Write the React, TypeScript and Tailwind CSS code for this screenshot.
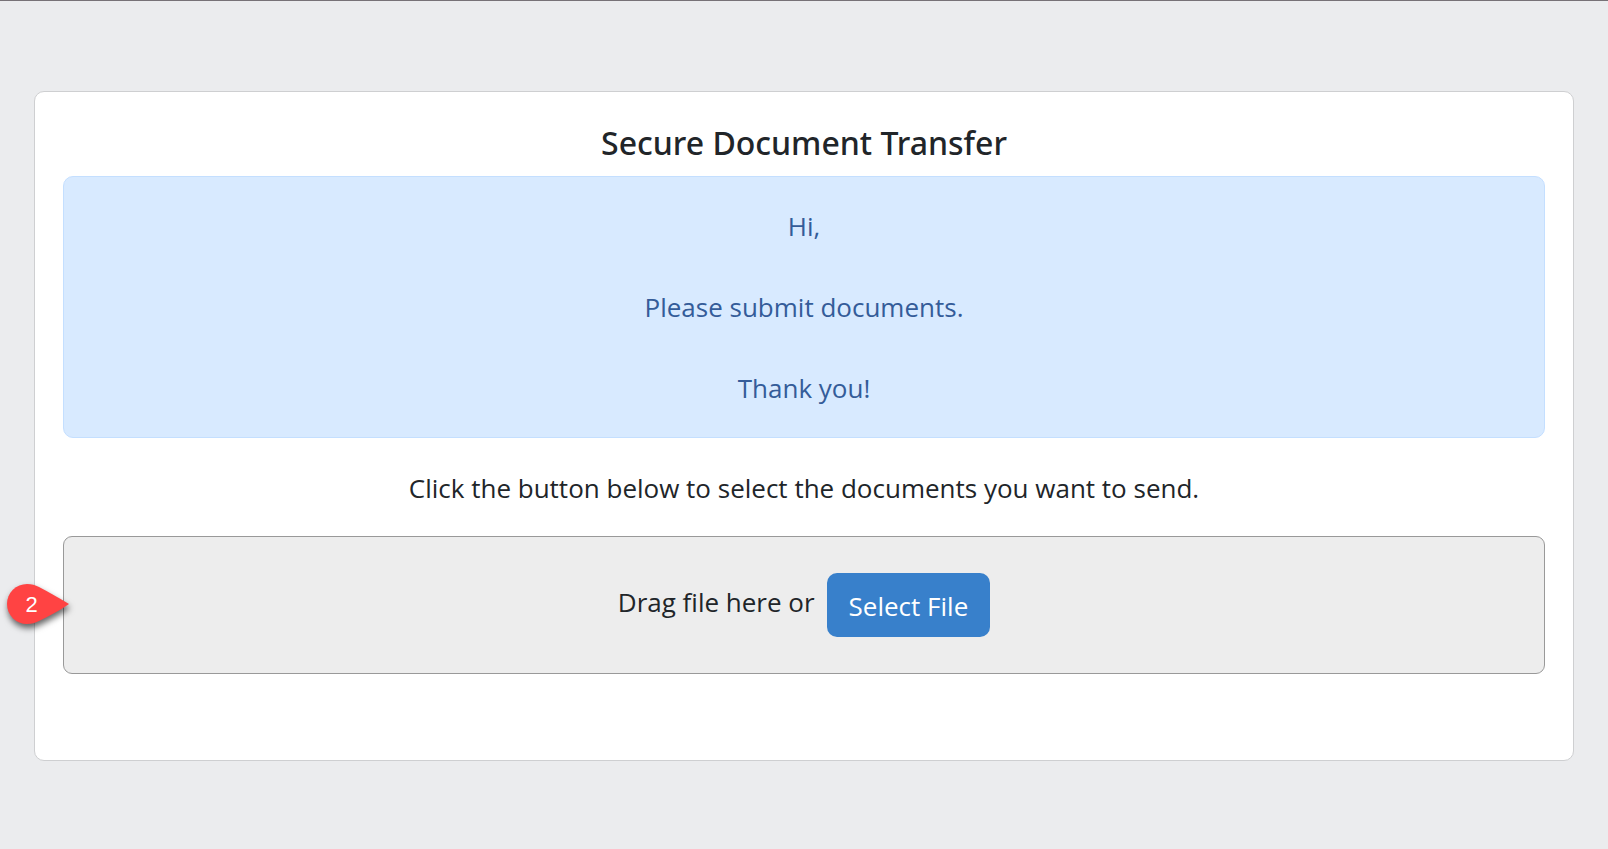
import React from "react";

const MESSAGE = ["Hi,", "Please submit documents.", "Thank you!"];

const StepMarker: React.FC<{ step: number }> = ({ step }) => {
    return (
        <div className="absolute -left-[57px] top-[47px] w-[62px] h-10">
            <svg
                viewBox="0 0 62 40"
                className="absolute inset-0 size-full overflow-visible drop-shadow-[1px_4px_3px_rgba(0,0,0,0.6)]"
                aria-hidden="true"
            >
                <path d="M20 0C25 0 28 1 32 3C42 8 52 14 62 20C52 27 42 32 32 37C28 39 25 40 20 40A20 20 0 0 1 20 0Z" fill="#ff4343" />
            </svg>
            <span className="relative flex h-10 w-[49px] items-center justify-center font-['Liberation_Sans',sans-serif] text-[22px] text-white">
                {step}
            </span>
        </div>
    );
};

const MessageBox: React.FC = () => {
    return (
        <div className="flex flex-col gap-10 rounded-[10px] border border-[#c4dfff] bg-[#d8eaff] pt-[29px] pb-7 text-[#345c99]">
            {MESSAGE.map((line) => (
                <p key={line}>{line}</p>
            ))}
        </div>
    );
};

const DropZone: React.FC = () => {
    return (
        <div className="relative flex items-center justify-center gap-3 rounded-[9px] border border-[#999999] bg-[#ededed] py-9">
            <StepMarker step={2} />
            <span className="pb-1.5">Drag file here or</span>
            <button type="button" className="h-16 rounded-[10px] bg-[#3880cb] px-[22px] pt-0.5 text-white hover:bg-[#2f72b8]">
                Select File
            </button>
        </div>
    );
};

const App: React.FC = () => {
    return (
        <div className="min-h-screen border-t border-[#777277] bg-[#ebecee] px-[34px] pt-[90px] pb-20 font-['Open_Sans',sans-serif] text-[26px] leading-[41px] text-[#212529]">
            <main className="rounded-[10px] border border-[#cecfd1] bg-white px-7 pt-[29px] pb-[86px] text-center">
                <h1 className="mb-[11px] font-['Noto_Sans',sans-serif] text-[32px] leading-[44px] font-medium">Secure Document Transfer</h1>
                <MessageBox />
                <p className="mt-[30px] mb-[27px]">Click the button below to select the documents you want to send.</p>
                <DropZone />
            </main>
        </div>
    );
};

export default App;
